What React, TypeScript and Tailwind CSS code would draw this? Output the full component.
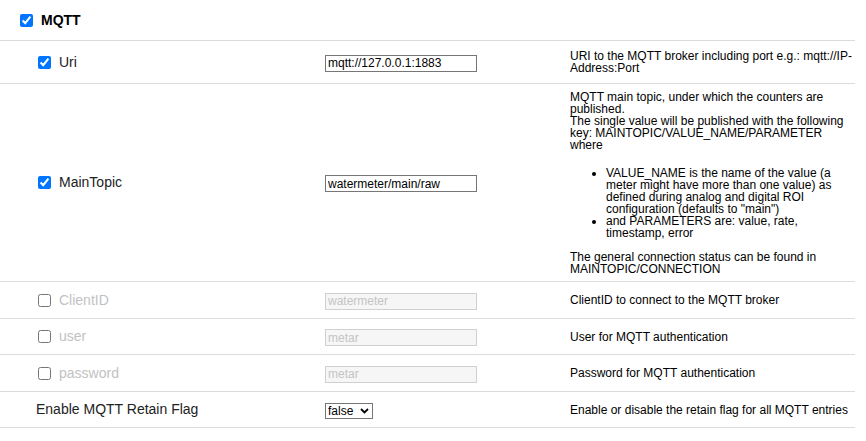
import React from "react";

const font = { fontFamily: '"Liberation Sans", Arial, sans-serif' };

function Check({ checked }: { checked: boolean }) {
  return (
    <input
      type="checkbox"
      checked={checked}
      readOnly
      className="m-0 h-[13px] w-[13px] shrink-0 accent-[#0075ff]"
    />
  );
}

function TextBox({ value, disabled }: { value: string; disabled?: boolean }) {
  return (
    <input
      readOnly
      value={value}
      className={
        disabled
          ? "h-[17px] w-[152px] border border-[#d0d0d0] bg-[#f6f6f6] px-[2px] text-[12px] leading-[15px] text-[#c4c4c4] outline-none"
          : "h-[17px] w-[152px] border border-[#767676] bg-white px-[2px] text-[12px] leading-[15px] text-black outline-none"
      }
    />
  );
}

type Row = {
  label: string;
  value: string;
  checked: boolean;
  disabled?: boolean;
  desc: React.ReactNode;
};

const simpleRows: Row[] = [
  { label: "ClientID", value: "watermeter", checked: false, disabled: true, desc: "ClientID to connect to the MQTT broker" },
  { label: "user", value: "metar", checked: false, disabled: true, desc: "User for MQTT authentication" },
  { label: "password", value: "metar", checked: false, disabled: true, desc: "Password for MQTT authentication" },
];

function Label({ checked, text, disabled }: { checked: boolean; text: string; disabled?: boolean }) {
  return (
    <div className="flex w-[325px] shrink-0 items-center gap-[8px] pl-[38px]">
      <Check checked={checked} />
      <span className={disabled ? "text-[14px] text-[#c2c2c2]" : "text-[14px] text-[#222]"}>{text}</span>
    </div>
  );
}

export default function App() {
  return (
    <div className="w-[866px] h-[441px] bg-white text-black" style={font}>
      <div className="w-[855px]">
        <div className="flex h-[40px] items-center gap-[8px] pl-[20px]">
          <Check checked />
          <span className="text-[14px] font-bold">MQTT</span>
        </div>

        <div className="flex h-[43px] items-center border-t border-[#dcdcdc]">
          <Label checked text="Uri" />
          <div className="w-[245px] shrink-0">
            <TextBox value="mqtt://127.0.0.1:1883" />
          </div>
          <div className="w-[292px] shrink-0 text-[12px] leading-[12px]">
            URI to the MQTT broker including port e.g.: mqtt://IP-Address:Port
          </div>
        </div>

        <div className="flex h-[198px] items-center border-t border-[#dcdcdc]">
          <Label checked text="MainTopic" />
          <div className="w-[245px] shrink-0">
            <TextBox value="watermeter/main/raw" />
          </div>
          <div className="w-[278px] shrink-0 text-[12px] leading-[12px]">
            <p>
              MQTT main topic, under which the counters are published.
              <br />
              The single value will be published with the following key: MAINTOPIC/VALUE_NAME/PARAMETER where
            </p>
            <ul className="mt-[16px] list-disc pl-[36px]">
              <li>
                VALUE_NAME is the name of the value (a meter might have more than one value) as defined during analog and
                digital ROI configuration (defaults to "main")
              </li>
              <li>and PARAMETERS are: value, rate, timestamp, error</li>
            </ul>
            <p className="mt-[12px]">
              The general connection status can be found in MAINTOPIC/CONNECTION
            </p>
          </div>
        </div>

        {simpleRows.map((r, i) => (
          <div key={r.label} className={`flex items-center border-t border-[#dcdcdc] ${i === 1 ? "h-[36px]" : "h-[37px]"}`}>
            <Label checked={r.checked} text={r.label} disabled={r.disabled} />
            <div className="w-[245px] shrink-0">
              <TextBox value={r.value} disabled={r.disabled} />
            </div>
            <div className="flex-1 pr-[6px] text-[12px] leading-[12px]">{r.desc}</div>
          </div>
        ))}

        <div className="flex h-[37px] items-center border-y border-[#dcdcdc]">
          <div className="w-[325px] shrink-0 pl-[36px] text-[14px] text-[#222]">Enable MQTT Retain Flag</div>
          <div className="w-[245px] shrink-0">
            <span className="inline-flex h-[16px] w-[48px] items-center justify-between border border-[#767676] px-[2px] text-[12px] leading-none">
              false
              <svg width="9" height="6" viewBox="0 0 9 6" className="mr-[1px]">
                <path d="M1 1 L4.5 4.5 L8 1" fill="none" stroke="#000" strokeWidth="1.8" />
              </svg>
            </span>
          </div>
          <div className="flex-1 pr-[6px] text-[12px] leading-[12px]">
            Enable or disable the retain flag for all MQTT entries
          </div>
        </div>
      </div>
    </div>
  );
}
